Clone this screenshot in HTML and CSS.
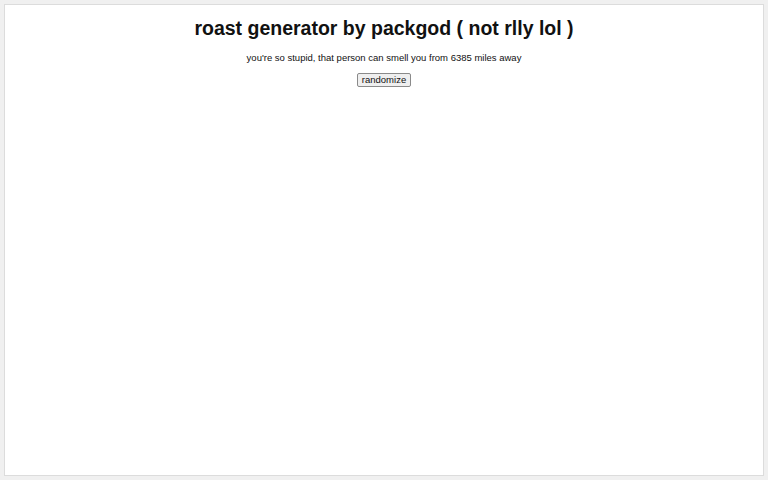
FILE: index.html
```html
<!DOCTYPE html>
<html lang="en">
<head>
    <meta charset="UTF-8">
    <meta name="viewport" content="width=device-width, initial-scale=1.0">
    <title>roast generator</title>
    <link rel="stylesheet" href="styles.css">
</head>
<body>
    <div class="page">
        <h1>roast generator by packgod ( not rlly lol )</h1>
        <p id="roast">you're so stupid, that person can smell you from 6385 miles away</p>
        <button id="randomize" type="button">randomize</button>
    </div>
</body>
</html>
```
FILE: styles.css
```css
* {
    margin: 0;
    padding: 0;
    box-sizing: border-box;
}

body {
    background-color: #f0f0f0;
    font-family: 'Liberation Sans', Arial, sans-serif;
    color: #111;
    padding: 4px;
}

.page {
    background-color: #fff;
    border: 1px solid #dcdcdc;
    height: 472px;
    display: flex;
    flex-direction: column;
    align-items: center;
    padding-top: 11px;
}

h1 {
    font-size: 19.5px;
    font-weight: bold;
    line-height: 24px;
    margin-bottom: 12px;
}

p {
    font-size: 9.5px;
    line-height: 12px;
    margin-bottom: 9px;
}

button {
    font-family: 'Liberation Sans', Arial, sans-serif;
    font-size: 9.5px;
    line-height: 12px;
    padding: 0 4px;
    background-color: #efefef;
    border: 1px solid #8a8a8a;
    border-radius: 2px;
    color: #111;
}
```
